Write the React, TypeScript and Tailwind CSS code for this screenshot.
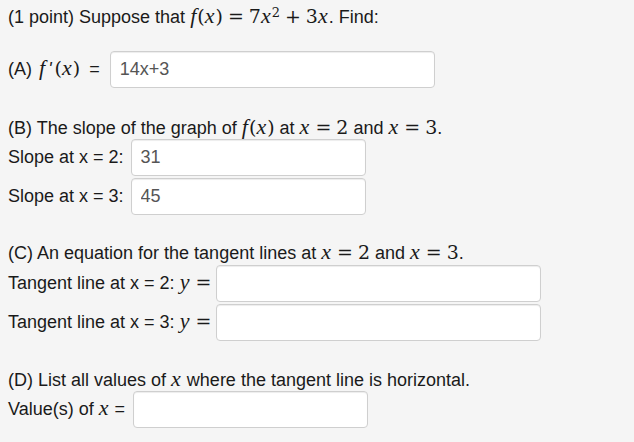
import React from 'react';

const M: React.FC<{ children: React.ReactNode; className?: string }> = ({ children, className = '' }) => (
  <span className={`font-['DejaVu_Serif',serif] text-[19px] leading-none ${className}`}>{children}</span>
);
const V: React.FC<{ children: React.ReactNode }> = ({ children }) => (
  <i className="font-['Liberation_Serif',serif] text-[22px] mr-[1px]">{children}</i>
);
const Op: React.FC<{ children: React.ReactNode }> = ({ children }) => (
  <span className="mx-[5px]">{children}</span>
);

const Field: React.FC<{ w: string; value?: string; className?: string }> = ({ w, value = '', className = '' }) => (
  <input
    readOnly
    value={value}
    className={`${w} ${className} h-[37px] bg-white border border-[#cfcfcf] rounded-[4px] px-[9px] text-[18px] text-[#555] shadow-[inset_0_1px_1px_rgba(0,0,0,0.075)] outline-none`}
  />
);

export default function App() {
  return (
    <div className="w-[634px] h-[442px] bg-[#f5f5f5] text-[#1a1a1a] font-['Liberation_Sans',Arial,sans-serif] text-[18px] pl-[8px] pt-[5px] overflow-hidden">
      <div className="h-[20px] leading-[20px] whitespace-nowrap">
        (1 point) Suppose that{' '}
        <M>
          <V>f</V>(<V>x</V>)<Op>=</Op>7<V>x</V>
          <sup className="text-[13px]">2</sup>
          <Op>+</Op>3<V>x</V>
        </M>
        . Find:
      </div>

      <div className="mt-[26px] flex items-center">
        <span className="whitespace-nowrap">
          (A){' '}
          <M className="ml-[2px] mr-[4px]">
            <V>f</V>
            <span className="font-['Liberation_Sans',sans-serif] text-[18px] ml-[2px] mr-[3px] italic">'</span>(<V>x</V>)
          </M>{' '}
          =
        </span>
        <Field w="w-[325px]" value="14x+3" className="ml-[10px]" />
      </div>

      <div className="mt-[28px] h-[20px] leading-[20px] whitespace-nowrap">
        (B) The slope of the graph of{' '}
        <M>
          <V>f</V>(<V>x</V>)
        </M>{' '}
        at{' '}
        <M>
          <V>x</V>
          <Op>=</Op>2
        </M>{' '}
        and{' '}
        <M>
          <V>x</V>
          <Op>=</Op>3
        </M>
        .
      </div>
      <div className="mt-[3px] flex flex-col gap-[2px]">
        <div className="flex items-center">
          <span>Slope at x = 2:</span>
          <Field w="w-[235px]" value="31" className="ml-[7px]" />
        </div>
        <div className="flex items-center">
          <span>Slope at x = 3:</span>
          <Field w="w-[235px]" value="45" className="ml-[7px]" />
        </div>
      </div>

      <div className="mt-[26px] h-[20px] leading-[20px] whitespace-nowrap">
        (C) An equation for the tangent lines at{' '}
        <M>
          <V>x</V>
          <Op>=</Op>2
        </M>{' '}
        and{' '}
        <M>
          <V>x</V>
          <Op>=</Op>3
        </M>
        .
      </div>
      <div className="mt-[4px] flex flex-col gap-[2px]">
        <div className="flex items-center">
          <span className="whitespace-nowrap">
            Tangent line at x = 2:{' '}
            <M>
              <V>y</V>
              <Op>=</Op>
            </M>
          </span>
          <Field w="w-[325px]" />
        </div>
        <div className="flex items-center">
          <span className="whitespace-nowrap">
            Tangent line at x = 3:{' '}
            <M>
              <V>y</V>
              <Op>=</Op>
            </M>
          </span>
          <Field w="w-[325px]" />
        </div>
      </div>

      <div className="mt-[27px] h-[20px] leading-[20px] whitespace-nowrap">
        (D) List all values of{' '}
        <M>
          <V>x</V>
        </M>{' '}
        where the tangent line is horizontal.
      </div>
      <div className="mt-[3px] flex items-center">
        <span className="whitespace-nowrap">
          Value(s) of{' '}
          <M>
            <V>x</V>
          </M>{' '}
          =
        </span>
        <Field w="w-[235px]" className="ml-[8px]" />
      </div>
    </div>
  );
}
